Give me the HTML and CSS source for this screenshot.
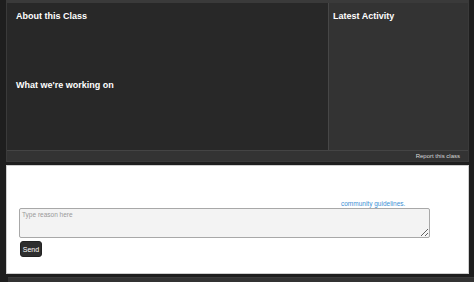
FILE: index.html
```html
<!DOCTYPE html>
<html>
<head>
<meta charset="utf-8">
<link rel="stylesheet" href="styles.css">
</head>
<body>
<div class="panel">
  <div class="cols">
    <div class="col-main">
      <h2 class="h about">About this Class</h2>
      <h2 class="h">What we're working on</h2>
    </div>
    <div class="col-side">
      <h2 class="h">Latest Activity</h2>
    </div>
  </div>
  <div class="footer-bar"><a class="report">Report this class</a></div>
</div>
<div class="report-box">
  <p class="guide"><a class="guide-link">community guidelines.</a></p>
  <textarea class="reason" placeholder="Type reason here"></textarea>
  <button class="send">Send</button>
</div>
<div class="bottom-strip"></div>
</body>
</html>
```
FILE: styles.css
```css
html, body {
  margin: 0;
  padding: 0;
  background: #1e1e1e;
  font-family: "Liberation Sans", Arial, sans-serif;
  height: 282px;
  overflow: hidden;
}
.panel {
  margin: 0 5px 0 6px;
  border: 1px solid #3a3a3a;
  border-top: 3px solid #3a3a3a;
  background: #2a2a2a;
}
.cols {
  display: flex;
  height: 147px;
}
.col-main {
  width: 312px;
  background: #282828;
  padding: 8px 0 0 9px;
  border-right: 1px solid #474747;
}
.col-side {
  flex: 1;
  background: #333333;
  padding: 8px 0 0 4px;
}
.h {
  margin: 0;
  font-size: 9px;
  line-height: 11px;
  font-weight: bold;
  color: #ffffff;
}
.about {
  margin-bottom: 58px;
}
.footer-bar {
  height: 10px;
  background: #333333;
  border-top: 1px solid #444;
  display: flex;
  justify-content: flex-end;
  align-items: center;
  padding-right: 8px;
}
.report {
  font-size: 6px;
  color: #d8d8d8;
}
.report-box {
  margin: 3px 5px 0 6px;
  height: 109px;
  background: #ffffff;
  border: 1px solid #cfcfcf;
  box-sizing: border-box;
  padding: 0 0 0 12px;
}
.guide {
  margin: 33px 0 0 0;
  padding-left: 322px;
  height: 9px;
  font-size: 6.5px;
  line-height: 9px;
}
.guide-link {
  color: #3d8fd4;
}
.reason {
  display: block;
  margin: 0;
  width: 411px;
  height: 30px;
  box-sizing: border-box;
  background: #f3f3f3;
  border: 1px solid #a8a8a8;
  border-radius: 2px;
  padding: 2px 2px;
  font-family: "Liberation Sans", Arial, sans-serif;
  font-size: 6.5px;
  resize: vertical;
}
.reason::placeholder {
  color: #999999;
}
.send {
  display: block;
  margin: 3px 0 0 1px;
  width: 22px;
  height: 16px;
  padding: 0;
  background: #2e2e2e;
  border: 1px solid #222;
  border-radius: 3px;
  color: #ffffff;
  font-family: "Liberation Sans", Arial, sans-serif;
  font-size: 7px;
}
.bottom-strip {
  margin: 3px 0 0 8px;
  height: 6px;
  background: #333333;
  border-top: 1px solid #3c3c3c;
}
```
